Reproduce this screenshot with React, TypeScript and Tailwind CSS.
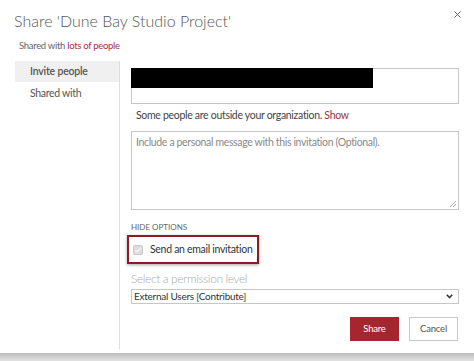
import { X } from "lucide-react";

export default function App() {
  return (
    <div
      className="relative flex h-[361px] w-[474px] flex-col overflow-hidden bg-white text-[#444]"
      style={{ fontFamily: 'Lato, "Open Sans", sans-serif' }}
    >
      {/* Header */}
      <div className="px-[14px] pt-[10px]">
        <h1 className="text-[16px] font-light leading-[22px] text-[#555]">
          Share 'Dune Bay Studio Project'
        </h1>
        <button className="absolute right-[11px] top-[9px] text-[#555]">
          <X size={11} strokeWidth={2} />
        </button>
        <p className="mt-[7px] pl-[5px] text-[9.5px] leading-[14px] tracking-[-0.3px] text-[#666]">
          Shared with <span className="text-[#a0323c]">lots of people</span>
        </p>
      </div>

      {/* Body */}
      <div className="mt-[8px] flex flex-1">
        {/* Left nav */}
        <nav className="ml-[15px] w-[105px] border-r border-[#dedede] pb-[3px]">
          <div className="h-[21px] bg-[#f0f0f0] pl-[15px] text-[10.5px] font-semibold leading-[21px] tracking-[-0.2px] text-[#555]">
            Invite people
          </div>
          <div className="mt-[1px] h-[21px] pl-[15px] text-[10.5px] leading-[21px] tracking-[-0.3px] text-[#555]">
            Shared with
          </div>
        </nav>

        {/* Right content */}
        <div className="w-[339px] pl-[11px] pt-[7px]">
          <div className="h-[36px] w-[328px] border border-[#c6c6c6]">
            <div className="-ml-px -mt-px h-[20px] w-[242px] bg-black" />
          </div>

          <p className="mt-[4px] pl-[5px] text-[10.5px] leading-[14px] tracking-[-0.3px] text-[#444]">
            Some people are outside your organization.{" "}
            <span className="text-[#a0323c]">Show</span>
          </p>

          <div className="relative mt-[9px] h-[79px] w-[328px] border border-[#c6c6c6] px-[4px] pt-[3px]">
            <p className="text-[10.5px] leading-[14px] tracking-[-0.35px] text-[#888]">
              Include a personal message with this invitation (Optional).
            </p>
            <svg className="absolute bottom-[1px] right-[1px]" width="8" height="8" viewBox="0 0 8 8">
              <line x1="7" y1="1" x2="1" y2="7" stroke="#999" strokeWidth="0.8" />
              <line x1="7" y1="4" x2="4" y2="7" stroke="#999" strokeWidth="0.8" />
            </svg>
          </div>

          <p className="mt-[11px] text-[8px] uppercase leading-[12px] text-[#666]">
            Hide options
          </p>

          <div className="-ml-[4px] mt-[2px] flex h-[29px] w-[132px] items-center border-2 border-[#8a1c24] pl-[4px] shadow-[0_1px_3px_rgba(0,0,0,0.35)]">
            <svg width="10" height="10" viewBox="0 0 10 10" className="shrink-0">
              <rect x="0.5" y="0.5" width="9" height="9" rx="1" fill="#dcdcdc" stroke="#c9c9c9" />
              <path d="M2.3 5.2 L4.2 7 L7.8 2.8" fill="none" stroke="#f6f6f6" strokeWidth="1.4" />
            </svg>
            <span className="ml-[7px] whitespace-nowrap text-[10.5px] leading-[15px] tracking-[-0.3px] text-[#333]">
              Send an email invitation
            </span>
          </div>

          <p className="mt-[6px] whitespace-nowrap text-[12px] font-light leading-[18px] tracking-[-0.4px] text-[#aaa]">
            Select a permission level
          </p>

          <div className="mt-[1px] flex h-[15px] w-[328px] items-center justify-between border border-[#c6c6c6] pl-[2px] pr-[5px]">
            <span className="text-[10px] leading-[13px] tracking-[-0.25px] text-[#333]">
              External Users [Contribute]
            </span>
            <svg width="7" height="5" viewBox="0 0 7 5">
              <path d="M0.8 0.8 L3.5 3.6 L6.2 0.8" fill="none" stroke="#333" strokeWidth="1.5" />
            </svg>
          </div>

          <div className="mt-[13px] flex w-[328px] justify-end gap-[10px] pr-[1px]">
            <button className="h-[24px] w-[49px] bg-[#a6262f] text-[9.5px] tracking-[-0.2px] text-white">
              Share
            </button>
            <button className="h-[24px] w-[49px] border border-[#c8c8c8] bg-white text-[9.5px] tracking-[-0.2px] text-[#555]">
              Cancel
            </button>
          </div>
        </div>
      </div>

      {/* Bottom strip */}
      <div className="mt-[4px] h-[8px] bg-gradient-to-b from-[#bdbdbd] to-[#e2e2e2]" />
    </div>
  );
}
